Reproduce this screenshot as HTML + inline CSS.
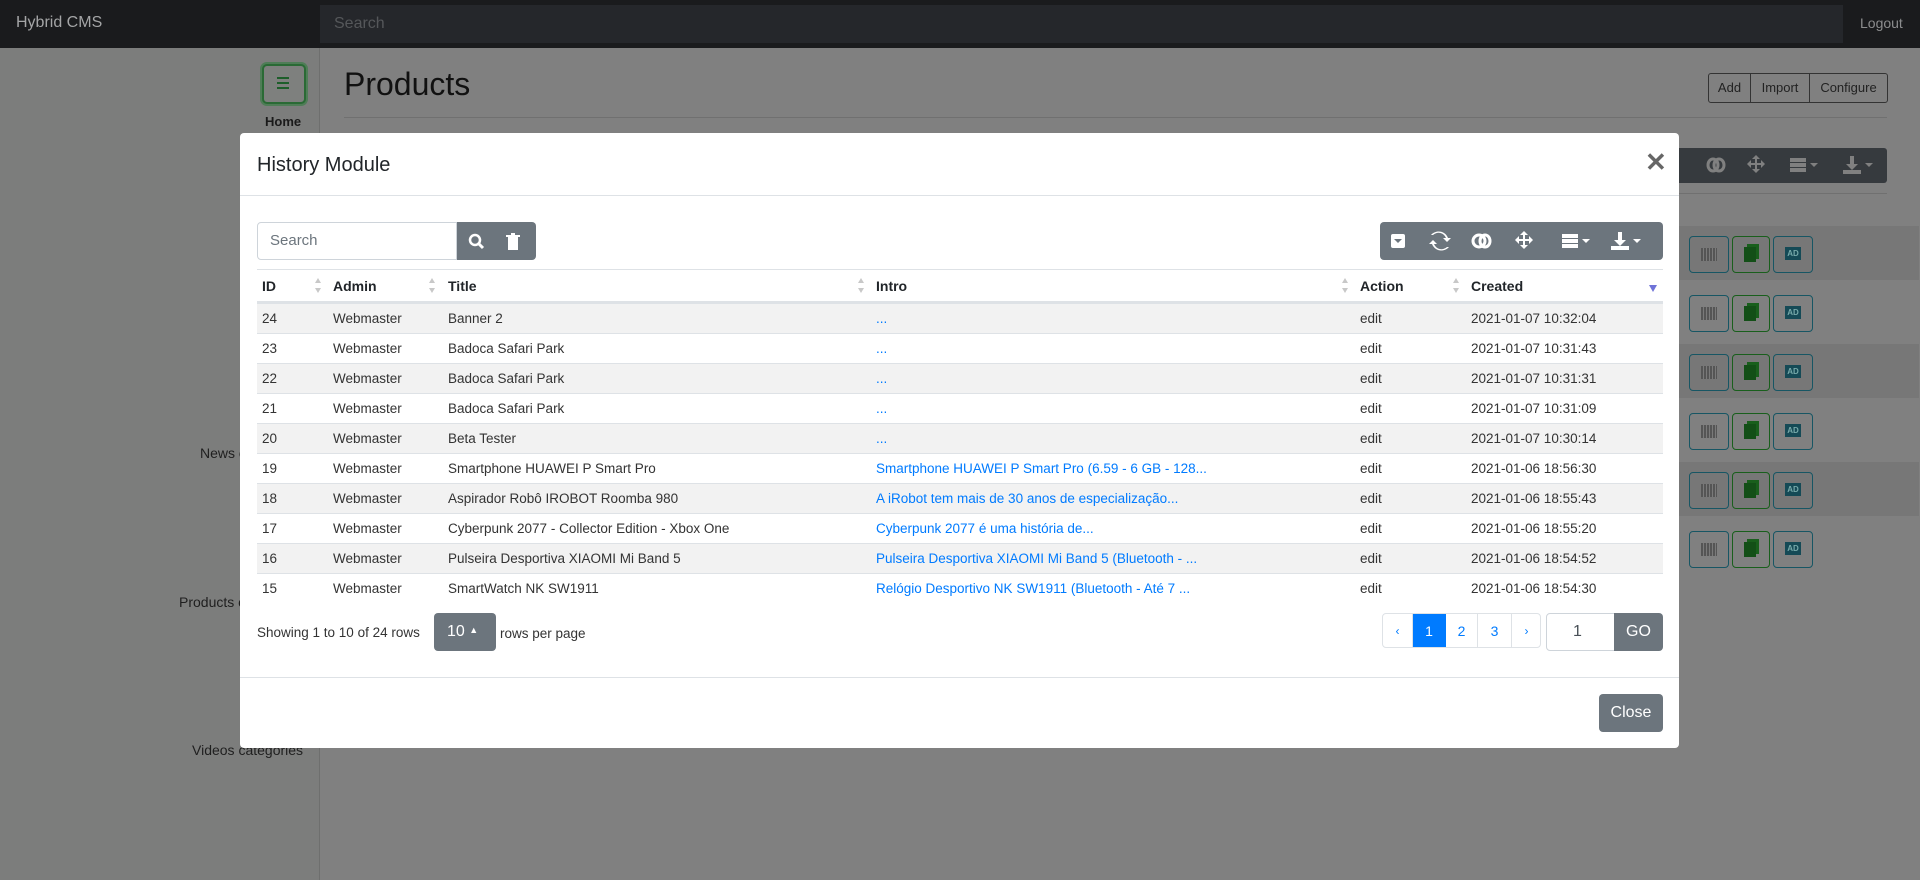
<!DOCTYPE html>
<html><head><meta charset="utf-8">
<style>
*{box-sizing:border-box;margin:0;padding:0}
body{width:1920px;height:880px;overflow:hidden;background:#808080;font-family:"Liberation Sans",sans-serif;font-size:14px;color:#212529;position:relative}
.abs{position:absolute}
.nav{left:0;top:0;width:1920px;height:48px;background:#1a1b1d}
.brand{left:16px;top:14px;color:#a4a5a6;font-size:16px}
.nsearch{left:320px;top:5px;width:1523px;height:38px;background:#25272b;color:#55575a;font-size:16px;padding:10px 14px}
.logout{left:1860px;top:15px;color:#8c8d8e;font-size:14px}
.side{left:0;top:48px;width:320px;height:832px;background:#7c7d7c;border-right:1px solid #6e6f6e}
.stext{color:#1f1f1f;font-size:14px}
.btnout{border:1px solid #333;border-radius:3px}
.modal{left:240px;top:133px;width:1439px;height:615px;background:#fff;border-radius:4px}
.th{font-weight:bold;font-size:14px;color:#212529}
.row{left:17px;width:1406px;height:30px;border-top:1px solid #dee2e6}
.row span{position:absolute;top:7px;font-size:13.5px;color:#333}
.row a{position:absolute;top:7px;font-size:13.5px;color:#007bff;text-decoration:none}
.gbtn{background:#6c757d;color:#fff}
.pg{position:absolute;top:0;height:34px;border-right:1px solid #dee2e6;color:#007bff;text-align:center;line-height:34px;font-size:14px}
</style></head><body>
<div class="abs nav"></div>
<div class="abs brand">Hybrid CMS</div>
<div class="abs nsearch">Search</div>
<div class="abs logout">Logout</div>
<div class="abs side"></div>
<div class="abs" style="left:262px;top:64px;width:44px;height:40px;border:2px solid #2a6a35;border-radius:5px;box-shadow:0 0 0 2px #4f7d57;background:#7e807e"></div>
<div class="abs" style="left:277px;top:77px;width:12px;height:2px;background:#1d5e2a;box-shadow:0 5px 0 #1d5e2a,0 10px 0 #1d5e2a"></div>
<div class="abs" style="left:265px;top:114px;font-size:13px;font-weight:bold;color:#1a1a1a">Home</div>
<div class="abs stext" style="top:445px;left:200px">News categories</div>
<div class="abs stext" style="top:594px;left:179px">Products categories</div>
<div class="abs stext" style="top:742px;left:192px">Videos categories</div>

<div class="abs" style="left:344px;top:66px;font-size:32px;color:#111">Products</div>
<div class="abs" style="left:344px;top:117px;width:1543px;height:1px;background:#707070"></div>
<div class="abs btnout" style="left:1708px;top:73px;width:180px;height:30px;display:flex;font-size:13px;color:#222;line-height:28px">
<div style="width:42px;text-align:center;border-right:1px solid #333">Add</div><div style="width:59px;text-align:center;border-right:1px solid #333">Import</div><div style="flex:1;text-align:center">Configure</div></div>
<div class="abs" style="left:1670px;top:148px;width:217px;height:35px;background:#363a3e;border-radius:3px"></div>
<svg class="abs" style="left:1670px;top:153px" width="217" height="24" fill="#808080">
<ellipse cx="43" cy="12" rx="5" ry="6" fill="none" stroke="#808080" stroke-width="3"/><ellipse cx="49" cy="12" rx="5" ry="6" fill="none" stroke="#808080" stroke-width="3"/>
<path d="M86 2l4 4h-3v4h4v-3l4 4-4 4v-3h-4v4h3l-4 4-4-4h3v-4h-4v3l-4-4 4-4v3h4v-4h-3z"/>
<rect x="120" y="5" width="16" height="4"/><rect x="120" y="10" width="16" height="4"/><rect x="120" y="15" width="16" height="4"/><path d="M140 10h8l-4 4z"/>
<rect x="180" y="3" width="4" height="9"/><path d="M176 11h12l-6 6z"/><rect x="173" y="17" width="18" height="4"/><path d="M195 10h8l-4 4z"/></svg>
<div class="abs" style="left:1679px;top:193px;width:208px;height:1px;background:#707070"></div>
<div class="abs" style="left:1679px;top:226px;width:240px;height:54px;background:#777"></div>
<div class="abs" style="left:1679px;top:344px;width:240px;height:54px;background:#777"></div>
<div class="abs" style="left:1679px;top:462px;width:240px;height:54px;background:#777"></div>
<div id="bgbtns"></div>

<div class="abs modal">
<div class="abs" style="left:17px;top:21px;font-size:20px;color:#212529">History Module</div>
<div class="abs" style="left:1405px;top:14px;font-size:26px;font-weight:bold;color:#666">✕</div>
<div class="abs" style="left:0;top:62px;width:1439px;height:1px;background:#dee2e6"></div>
<div class="abs" style="left:17px;top:89px;width:200px;height:38px;border:1px solid #ced4da;border-radius:4px 0 0 4px;color:#6c757d;font-size:15px;padding:9px 12px">Search</div>
<div class="abs gbtn" style="left:217px;top:89px;width:79px;height:38px;border-radius:0 4px 4px 0"></div>
<svg class="abs" style="left:228px;top:100px" width="60" height="18"><circle cx="7" cy="7" r="5" fill="none" stroke="#fff" stroke-width="2.5"/><line x1="11" y1="11" x2="15" y2="15" stroke="#fff" stroke-width="3"/><rect x="40" y="4" width="10" height="13" fill="#fff"/><rect x="38" y="2" width="14" height="2" fill="#fff"/><rect x="43" y="0" width="4" height="2" fill="#fff"/></svg>
<div class="abs gbtn" style="left:1140px;top:89px;width:283px;height:38px;border-radius:4px"></div>
<svg class="abs" style="left:1140px;top:96px" width="283" height="24" fill="#fff">
<rect x="11" y="5" width="14" height="14" rx="2"/><path d="M14 10h8l-4 4z" fill="#6c757d"/>
<g transform="translate(4,0)"><path d="M49 6a8 8 0 0 1 13 3l-3 0 4 4 4-4-3 0a10 10 0 0 0-17-3zM63 18a8 8 0 0 1-13-3l3 0-4-4-4 4 3 0a10 10 0 0 0 17 3z"/></g>
<ellipse cx="99" cy="12" rx="6" ry="6" fill="none" stroke="#fff" stroke-width="3"/><ellipse cx="105" cy="12" rx="5" ry="6" fill="none" stroke="#fff" stroke-width="3"/>
<g transform="translate(18,0)"><path d="M126 2l4 4h-3v4h4v-3l4 4-4 4v-3h-4v4h3l-4 4-4-4h3v-4h-4v3l-4-4 4-4v3h4v-4h-3z"/></g>
<g transform="translate(22,0)"><rect x="160" y="5" width="16" height="4"/><rect x="160" y="10" width="16" height="4"/><rect x="160" y="15" width="16" height="4"/><path d="M180 10h8l-4 4z"/></g>
<g transform="translate(25,0)"><rect x="213" y="3" width="4" height="9"/><path d="M209 11h12l-6 6z"/><rect x="206" y="17" width="18" height="4"/><path d="M228 10h8l-4 4z"/></g>
</svg>
<div class="abs" style="left:17px;top:136px;width:1406px;height:1px;background:#dee2e6"></div>
<div class="abs th" style="left:22px;top:145px">ID</div>
<div class="abs th" style="left:93px;top:145px">Admin</div>
<div class="abs th" style="left:208px;top:145px">Title</div>
<div class="abs th" style="left:636px;top:145px">Intro</div>
<div class="abs th" style="left:1120px;top:145px">Action</div>
<div class="abs th" style="left:1231px;top:145px">Created</div>
<svg class="abs" style="left:0;top:141px" width="1430" height="24" fill="#c8c8c8">
<path d="M78 4l3 5h-6zM78 19l3-5h-6z"/><path d="M192 4l3 5h-6zM192 19l3-5h-6z"/><path d="M621 4l3 5h-6zM621 19l3-5h-6z"/><path d="M1105 4l3 5h-6zM1105 19l3-5h-6z"/><path d="M1216 4l3 5h-6zM1216 19l3-5h-6z"/><path d="M1409 11h8l-4 7z" fill="#6f73d8"/></svg>
<div class="abs" style="left:17px;top:168px;width:1406px;height:2px;background:#dee2e6"></div>
<div id="rows"></div>
<div class="abs" style="left:17px;top:492px;font-size:13.5px;color:#333">Showing 1 to 10 of 24 rows</div>
<div class="abs gbtn" style="left:194px;top:480px;width:62px;height:38px;border-radius:4px;font-size:16px;padding:10px 13px">10 <span style="font-size:9px;vertical-align:3px">▲</span></div>
<div class="abs" style="left:260px;top:493px;font-size:13.5px;color:#333">rows per page</div>
<div class="abs" style="left:1142px;top:480px;width:159px;height:35px;border:1px solid #dee2e6;border-radius:4px;overflow:hidden">
<div class="pg" style="left:0;width:30px;font-size:12px">‹</div><div class="pg" style="left:30px;width:33px;background:#007bff;color:#fff;border-color:#007bff">1</div><div class="pg" style="left:63px;width:32px">2</div><div class="pg" style="left:95px;width:34px">3</div><div class="pg" style="left:129px;width:29px;border:0;font-size:12px">›</div></div>
<div class="abs" style="left:1306px;top:480px;width:69px;height:38px;border:1px solid #ced4da;border-radius:4px 0 0 4px;font-size:16px;padding:9px 26px;color:#495057">1</div>
<div class="abs gbtn" style="left:1374px;top:480px;width:49px;height:38px;border-radius:0 4px 4px 0;font-size:16px;text-align:center;line-height:38px">GO</div>
<div class="abs" style="left:0;top:544px;width:1439px;height:1px;background:#dee2e6"></div>
<div class="abs gbtn" style="left:1359px;top:561px;width:64px;height:38px;border-radius:4px;font-size:16px;text-align:center;line-height:38px">Close</div>
</div>
<script>
var d=[["24","Banner 2","..."],["23","Badoca Safari Park","..."],["22","Badoca Safari Park","..."],["21","Badoca Safari Park","..."],["20","Beta Tester","..."],["19","Smartphone HUAWEI P Smart Pro","Smartphone HUAWEI P Smart Pro (6.59 - 6 GB - 128..."],["18","Aspirador Robô IROBOT Roomba 980","A iRobot tem mais de 30 anos de especialização..."],["17","Cyberpunk 2077 - Collector Edition - Xbox One","Cyberpunk 2077 é uma história de..."],["16","Pulseira Desportiva XIAOMI Mi Band 5","Pulseira Desportiva XIAOMI Mi Band 5 (Bluetooth - ..."],["15","SmartWatch NK SW1911","Relógio Desportivo NK SW1911 (Bluetooth - Até 7 ..."]];
var t=["10:32:04","10:31:43","10:31:31","10:31:09","10:30:14","18:56:30","18:55:43","18:55:20","18:54:52","18:54:30"];
var h="";for(var i=0;i<10;i++){h+='<div class="abs row" style="top:'+(170+i*30)+'px;background:'+(i%2?'#fff':'#f2f2f2')+'"><span style="left:5px">'+d[i][0]+'</span><span style="left:76px">Webmaster</span><span style="left:191px">'+d[i][1]+'</span><a style="left:619px">'+d[i][2]+'</a><span style="left:1103px">edit</span><span style="left:1214px">2021-01-'+(i<5?'07':'06')+' '+t[i]+'</span></div>';}
document.getElementById("rows").innerHTML=h;
var b="";for(var j=0;j<6;j++){var y=236+j*59;b+='<div class="abs" style="left:1689px;top:'+y+'px;width:40px;height:37px;border:1px solid #175664;border-radius:4px"></div><div class="abs" style="left:1701px;top:'+(y+12)+'px;width:16px;height:13px;background:repeating-linear-gradient(90deg,#555 0 2px,#7a7a7a 2px 3px)"></div><div class="abs" style="left:1732px;top:'+y+'px;width:38px;height:37px;border:1px solid #195f1c;border-radius:4px"></div><div class="abs" style="left:1744px;top:'+(y+11)+'px;width:12px;height:15px;background:#134f17;box-shadow:3px -3px 0 #195f1c"></div><div class="abs" style="left:1773px;top:'+y+'px;width:40px;height:37px;border:1px solid #175664;border-radius:4px"></div><div class="abs" style="left:1785px;top:'+(y+11)+'px;width:16px;height:13px;background:#154a56;color:#7aa;font-size:8px;font-weight:bold;text-align:center;line-height:13px">AD</div>';}
document.getElementById("bgbtns").innerHTML=b;
</script>
</body></html>
